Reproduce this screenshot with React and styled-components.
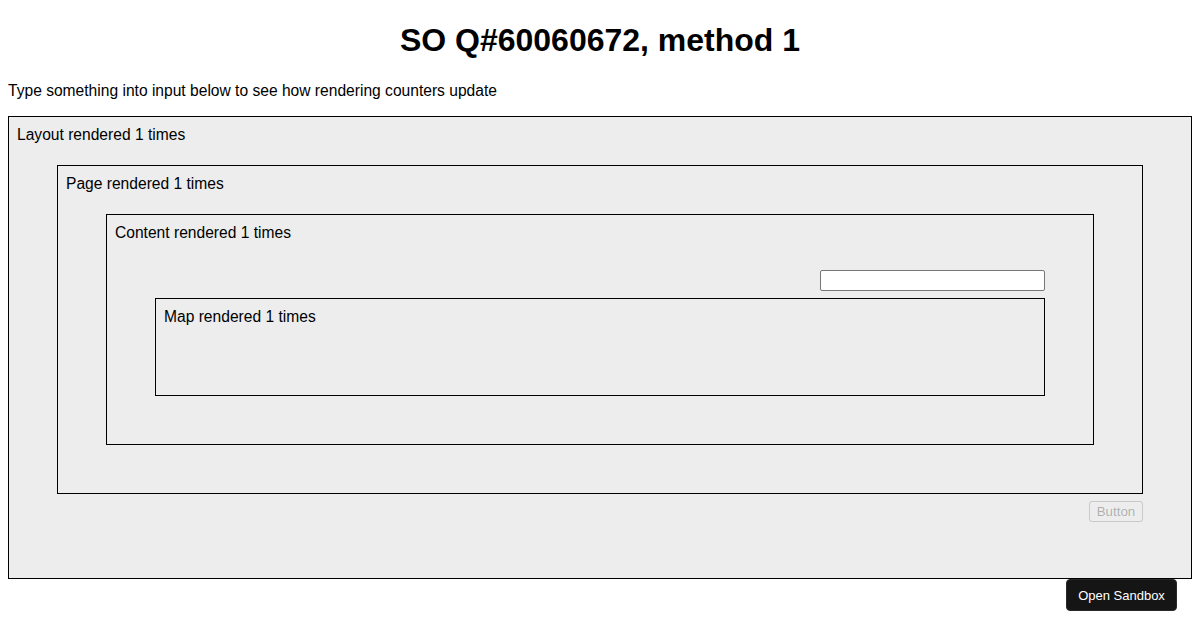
import React, { useState, useRef } from "react";
import styled, { createGlobalStyle } from "styled-components";

const GlobalStyle = createGlobalStyle`
  body {
    margin: 8px;
    font-family: "Liberation Sans", Arial, sans-serif;
    font-size: 15.6px;
    line-height: 18.4px;
    color: #000;
    background: #fff;
  }
`;

const Title = styled.h1`
  text-align: center;
  font-size: 32px;
  line-height: normal;
  font-weight: bold;
  margin: 14px 0 22.5px;
`;

const Intro = styled.div`
  margin-bottom: 16px;
`;

const Box = styled.div`
  border: 1px solid #000;
  padding: 8px;
  background: ${(p) => (p.$root ? "#ededed" : "transparent")};
  display: flex;
  flex-direction: column;
  margin: ${(p) => p.$margin || "0"};
  min-height: ${(p) => p.$minHeight || "auto"};
`;

const Label = styled.div`
  line-height: 18.4px;
  padding-top: 1px;
`;

const InputRow = styled.div`
  display: flex;
  justify-content: flex-end;
  margin: 27.6px 40px 0 0;
`;

const TextInput = styled.input`
  box-sizing: border-box;
  width: 225px;
  height: 21px;
  border: 1px solid #767676;
  border-radius: 2px;
  background: #fff;
  padding: 1px 2px;
  font-size: 13.33px;
  outline: none;
`;

const ButtonRow = styled.div`
  display: flex;
  justify-content: flex-end;
  margin: 7px 40px 48px 0;
`;

const GhostButton = styled.button`
  box-sizing: border-box;
  width: 54px;
  height: 21px;
  font-family: "Liberation Sans", Arial, sans-serif;
  font-size: 13.33px;
  color: rgba(16, 16, 16, 0.3);
  background: rgba(239, 239, 239, 0.3);
  border: 1px solid rgba(118, 118, 118, 0.3);
  border-radius: 3px;
  padding: 0;
`;

const SandboxLink = styled.a`
  position: fixed;
  right: 23px;
  bottom: 19px;
  box-sizing: border-box;
  width: 111px;
  height: 32px;
  display: flex;
  align-items: center;
  justify-content: center;
  background: #151515;
  color: #fff;
  border: 1px solid #2a2a2a;
  border-radius: 4px;
  font-size: 13px;
  line-height: normal;
  text-decoration: none;
`;

export default function App() {
  const [value, setValue] = useState("");
  const renders = useRef({ layout: 1, page: 1, content: 1, map: 1 });

  return (
    <>
      <GlobalStyle />
      <Title>SO Q#60060672, method 1</Title>
      <Intro>Type something into input below to see how rendering counters update</Intro>
      <Box $root>
        <Label>Layout rendered {renders.current.layout} times</Label>
        <Box $margin="20.6px 40px 0">
          <Label>Page rendered {renders.current.page} times</Label>
          <Box $margin="20.6px 40px 40px">
            <Label>Content rendered {renders.current.content} times</Label>
            <InputRow>
              <TextInput value={value} onChange={(e) => setValue(e.target.value)} />
            </InputRow>
            <Box $margin="7px 40px 40px" $minHeight="80px">
              <Label>Map rendered {renders.current.map} times</Label>
            </Box>
          </Box>
        </Box>
        <ButtonRow>
          <GhostButton disabled>Button</GhostButton>
        </ButtonRow>
      </Box>
      <SandboxLink href="#">Open Sandbox</SandboxLink>
    </>
  );
}
